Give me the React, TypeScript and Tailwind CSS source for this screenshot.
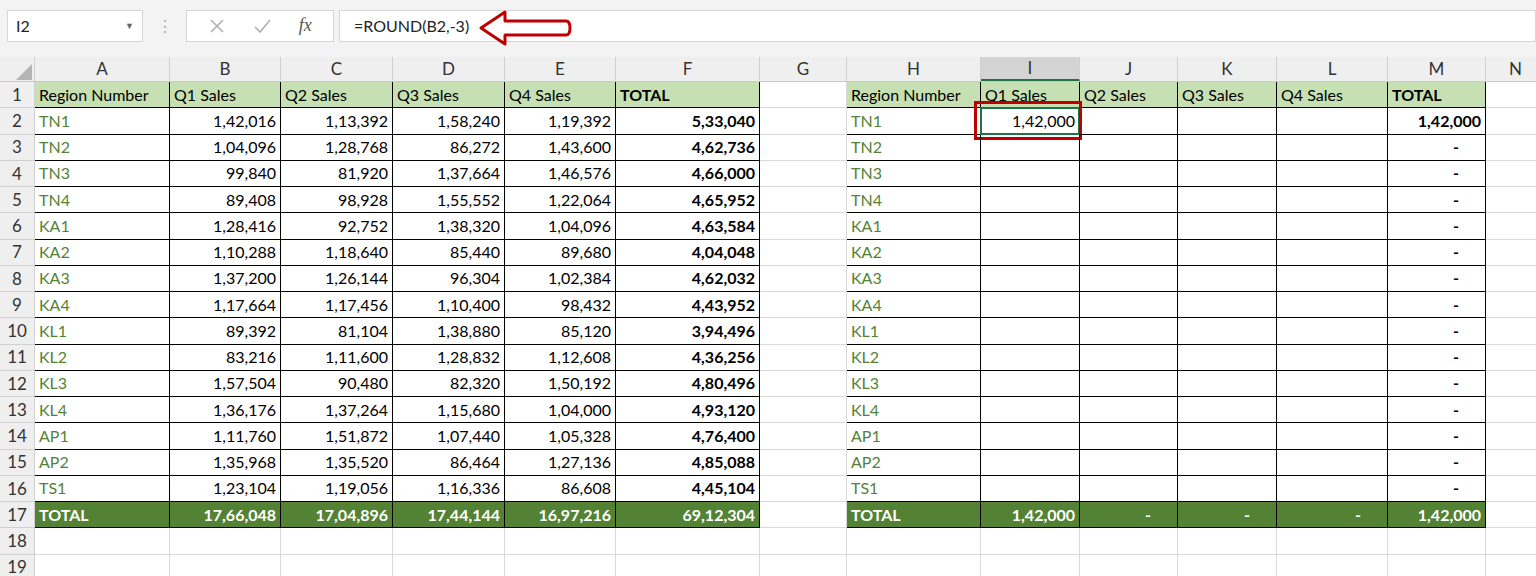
import React from "react";

const W = [35, 135, 111, 112, 112, 111, 144, 87, 134, 99, 98, 99, 111, 98, 60];
const L = ["", "A", "B", "C", "D", "E", "F", "G", "H", "I", "J", "K", "L", "M", "N"];
const data: [string, string, string, string, string, string][] = [
  ["TN1", "1,42,016", "1,13,392", "1,58,240", "1,19,392", "5,33,040"],
  ["TN2", "1,04,096", "1,28,768", "86,272", "1,43,600", "4,62,736"],
  ["TN3", "99,840", "81,920", "1,37,664", "1,46,576", "4,66,000"],
  ["TN4", "89,408", "98,928", "1,55,552", "1,22,064", "4,65,952"],
  ["KA1", "1,28,416", "92,752", "1,38,320", "1,04,096", "4,63,584"],
  ["KA2", "1,10,288", "1,18,640", "85,440", "89,680", "4,04,048"],
  ["KA3", "1,37,200", "1,26,144", "96,304", "1,02,384", "4,62,032"],
  ["KA4", "1,17,664", "1,17,456", "1,10,400", "98,432", "4,43,952"],
  ["KL1", "89,392", "81,104", "1,38,880", "85,120", "3,94,496"],
  ["KL2", "83,216", "1,11,600", "1,28,832", "1,12,608", "4,36,256"],
  ["KL3", "1,57,504", "90,480", "82,320", "1,50,192", "4,80,496"],
  ["KL4", "1,36,176", "1,37,264", "1,15,680", "1,04,000", "4,93,120"],
  ["AP1", "1,11,760", "1,51,872", "1,07,440", "1,05,328", "4,76,400"],
  ["AP2", "1,35,968", "1,35,520", "86,464", "1,27,136", "4,85,088"],
  ["TS1", "1,23,104", "1,19,056", "1,16,336", "86,608", "4,45,104"],
];

type C = { t?: string; cls?: string; right?: boolean };

function rowCells(r: number): C[] {
  const cells: C[] = Array.from({ length: 15 }, () => ({}));
  const hdr = "bg-[#c6e0b4] border-r border-b border-black text-black";
  const tb = "border-r border-b border-black";
  const tot = "bg-[#548235] text-white font-bold border-r border-b border-black";
  const tables = [1, 8];
  if (r === 1) {
    const h = ["Region Number", "Q1 Sales", "Q2 Sales", "Q3 Sales", "Q4 Sales", "TOTAL"];
    tables.forEach((s) => h.forEach((t, i) => (cells[s + i] = { t, cls: hdr + (i === 5 ? " font-bold" : "") })));
  } else if (r <= 16) {
    const d = data[r - 2];
    d.forEach((t, i) => (cells[1 + i] = { t, right: i > 0, cls: tb + (i === 0 ? " text-[#548235]" : i === 5 ? " font-bold" : "") }));
    for (let i = 0; i < 6; i++) {
      let t = "";
      if (i === 0) t = d[0];
      if (i === 5) t = r === 2 ? "1,42,000" : "-";
      if (i === 1 && r === 2) t = "1,42,000";
      cells[8 + i] = { t, right: i > 0, cls: tb + (i === 0 ? " text-[#548235]" : i === 5 ? " font-bold" : "") + (i === 5 && r > 2 ? " pr-[26px]" : "") };
    }
  } else if (r === 17) {
    ["TOTAL", "17,66,048", "17,04,896", "17,44,144", "16,97,216", "69,12,304"].forEach(
      (t, i) => (cells[1 + i] = { t, right: i > 0, cls: tot })
    );
    ["TOTAL", "1,42,000", "-", "-", "-", "1,42,000"].forEach(
      (t, i) => (cells[8 + i] = { t, right: i > 0, cls: tot + (t === "-" ? " pr-[26px]" : "") })
    );
  }
  return cells;
}

export default function App() {
  return (
    <div className="w-[1536px] h-[576px] overflow-hidden bg-white" style={{ fontFamily: "Lato, 'Noto Sans', sans-serif" }}>
      <div className="h-[51px] bg-[#f3f3f3] flex items-center gap-0 relative">
        <div className="ml-[7px] w-[136px] h-[32px] bg-white border border-[#d6d6d6] flex items-center justify-between px-[8px] text-[16px] text-[#222]">
          <span>I2</span>
          <span className="text-[#666] text-[9px]">▼</span>
        </div>
        <div className="w-[43px] flex justify-center text-[#aaa] text-[16px] leading-none">⋮</div>
        <div className="w-[148px] h-[32px] bg-white border border-[#d6d6d6] flex items-center justify-around px-2 text-[#bbb]">
          <svg width="18" height="18" viewBox="0 0 18 18"><path d="M3 3L15 15M15 3L3 15" stroke="#b0b0b0" strokeWidth="1.6" /></svg>
          <svg width="20" height="18" viewBox="0 0 20 18"><path d="M3 10L8 15L18 3" stroke="#b0b0b0" strokeWidth="1.6" fill="none" /></svg>
          <span className="italic text-[#555] text-[18px]" style={{ fontFamily: "'Liberation Serif', serif" }}>fx</span>
        </div>
        <div className="ml-[5px] flex-1 h-[32px] bg-white border border-[#d6d6d6] flex items-center pl-[14px] text-[16px] text-[#222]">
          =ROUND(B2,-3)
        </div>
        <svg className="absolute left-[478px] top-[9px]" width="96" height="38" viewBox="0 0 96 38">
          <path d="M3 19L27 3V12H88Q92 12 92 19Q92 26 88 26H27V35Z" fill="none" stroke="#c00000" strokeWidth="3" strokeLinejoin="round" />
        </svg>
      </div>
      <div className="h-[6px] bg-[#f3f3f3]" />
      <div className="flex h-[25px] bg-[#efefef] border-b border-[#c8c8c8]">
        {L.map((l, i) => (
          <div
            key={i}
            style={{ width: W[i] }}
            className={`shrink-0 flex items-center justify-center text-[17px] text-[#333] border-r border-[#d0d0d0] ${l === "I" ? "bg-[#d4d4d4] border-b-2 border-b-[#217346]" : ""}`}
          >
            {i === 0 ? <svg width="16" height="16" viewBox="0 0 16 16" className="ml-[14px] mt-[6px]"><path d="M16 0V16H0Z" fill="#b4b4b4" /></svg> : l}
          </div>
        ))}
      </div>
      {Array.from({ length: 19 }, (_, k) => k + 1).map((r) => {
        const cells = rowCells(r);
        return (
          <div key={r} className="flex h-[26.25px]">
            {cells.map((c, i) =>
              i === 0 ? (
                <div key={i} style={{ width: W[0] }} className="shrink-0 bg-[#efefef] border-r border-b border-[#d0d0d0] flex items-center justify-center text-[17px] text-[#333]">
                  {r}
                </div>
              ) : (
                <div
                  key={i}
                  style={{ width: W[i] }}
                  className={`relative shrink-0 flex items-center px-[4px] text-[16px] whitespace-nowrap overflow-visible ${c.right ? "justify-end" : ""} ${c.cls ?? "border-r border-b border-[#d9d9d9] text-black"}`}
                >
                  {c.t}
                  {r === 2 && i === 9 && (
                    <>
                      <div className="absolute inset-[-1px] border-2 border-[#217346]" />
                      <div className="absolute left-[-7px] top-[-7px] w-[108px] h-[39px] border-[3px] border-[#c00000]" />
                    </>
                  )}
                </div>
              )
            )}
          </div>
        );
      })}
    </div>
  );
}
